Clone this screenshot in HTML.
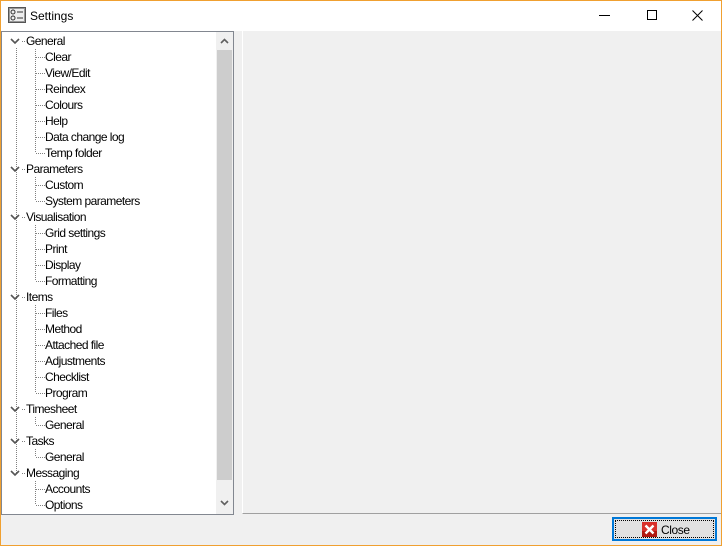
<!DOCTYPE html>
<html><head><style>
*{margin:0;padding:0;box-sizing:border-box}
body{width:722px;height:546px;background:#f0f0f0;position:relative;overflow:hidden;font-family:"Liberation Sans",Tahoma,sans-serif;font-size:12px;color:#000}
.frame{position:absolute;left:0;top:0;width:722px;height:546px;border:1px solid #f0a030;pointer-events:none;z-index:10}
.title{position:absolute;left:0;top:0;width:722px;height:31px;background:#fff}
.title .t{position:absolute;left:30px;top:9px;font-size:12px}
.tree{position:absolute;left:1px;top:31px;width:233px;height:484px;background:#fff;border:1px solid #828790}
.sb{position:absolute;left:214px;top:0;width:17px;height:482px;background:#f0f0f0}
.thumb{position:absolute;left:1px;top:18px;width:15px;height:430px;background:#cdcdcd}
.row{position:absolute;height:16px;line-height:16px;white-space:nowrap;letter-spacing:-0.55px}
.panel{position:absolute;left:242px;top:31px;width:479px;height:483px;background:#f0f0f0;border-left:1px solid #fff;border-bottom:1px solid #a0a0a0}
.btn{position:absolute;left:612px;top:517px;width:105px;height:24px;border:2px solid #0078d7;background:#e1e1e1}
.btn .in{position:absolute;left:1px;top:1px;right:1px;bottom:1px;border:1px dotted #000}
</style></head><body>
<div class="title">
<svg style="position:absolute;left:8px;top:7px" width="18" height="16"><rect x="0.5" y="0.5" width="17" height="15" fill="#ddd" stroke="#555"/><rect x="1.5" y="1.5" width="15" height="13" fill="#eee" stroke="#999"/><circle cx="5" cy="5" r="2" fill="none" stroke="#333"/><circle cx="5" cy="11" r="2" fill="none" stroke="#333"/><line x1="9" y1="5" x2="15" y2="5" stroke="#333"/><line x1="9" y1="11" x2="15" y2="11" stroke="#333"/></svg>
<div class="t">Settings</div>
<div style="position:absolute;left:599px;top:15px;width:11px;height:1px;background:#000"></div>
<div style="position:absolute;left:647px;top:10px;width:10px;height:10px;border:1px solid #000"></div>
<svg style="position:absolute;left:692px;top:10px" width="11" height="11"><path d="M0.5 0.5L10.5 10.5M10.5 0.5L0.5 10.5" stroke="#000"/></svg>
</div>
<div class="tree">
<svg style="position:absolute;left:0;top:0" width="214" height="482">
<g stroke="#808080" stroke-dasharray="1 1" fill="none">
<line x1="14.5" y1="16" x2="14.5" y2="441"/>
<line x1="20" y1="9.5" x2="23" y2="9.5"/><line x1="20" y1="137.5" x2="23" y2="137.5"/><line x1="20" y1="185.5" x2="23" y2="185.5"/><line x1="20" y1="265.5" x2="23" y2="265.5"/><line x1="20" y1="377.5" x2="23" y2="377.5"/><line x1="20" y1="409.5" x2="23" y2="409.5"/><line x1="20" y1="441.5" x2="23" y2="441.5"/>
<line x1="33.5" y1="17" x2="33.5" y2="121"/><line x1="33.5" y1="145" x2="33.5" y2="169"/><line x1="33.5" y1="193" x2="33.5" y2="249"/><line x1="33.5" y1="273" x2="33.5" y2="361"/><line x1="33.5" y1="385" x2="33.5" y2="393"/><line x1="33.5" y1="417" x2="33.5" y2="425"/><line x1="33.5" y1="449" x2="33.5" y2="473"/>
<path d="M34 25.5h9M34 41.5h9M34 57.5h9M34 73.5h9M34 89.5h9M34 105.5h9M34 121.5h9M34 153.5h9M34 169.5h9M34 201.5h9M34 217.5h9M34 233.5h9M34 249.5h9M34 281.5h9M34 297.5h9M34 313.5h9M34 329.5h9M34 345.5h9M34 361.5h9M34 393.5h9M34 425.5h9M34 457.5h9M34 473.5h9"/>
</g>
<g stroke="#555" stroke-width="1.6" fill="none">
<path d="M9 7l4 4 4-4"/><path d="M9 135l4 4 4-4"/><path d="M9 183l4 4 4-4"/><path d="M9 263l4 4 4-4"/><path d="M9 375l4 4 4-4"/><path d="M9 407l4 4 4-4"/><path d="M9 439l4 4 4-4"/>
</g>
</svg>
<div class="row" style="left:24px;top:1px">General</div>
<div class="row" style="left:43px;top:17px">Clear</div>
<div class="row" style="left:43px;top:33px">View/Edit</div>
<div class="row" style="left:43px;top:49px">Reindex</div>
<div class="row" style="left:43px;top:65px">Colours</div>
<div class="row" style="left:43px;top:81px">Help</div>
<div class="row" style="left:43px;top:97px">Data change log</div>
<div class="row" style="left:43px;top:113px">Temp folder</div>
<div class="row" style="left:24px;top:129px">Parameters</div>
<div class="row" style="left:43px;top:145px">Custom</div>
<div class="row" style="left:43px;top:161px">System parameters</div>
<div class="row" style="left:24px;top:177px">Visualisation</div>
<div class="row" style="left:43px;top:193px">Grid settings</div>
<div class="row" style="left:43px;top:209px">Print</div>
<div class="row" style="left:43px;top:225px">Display</div>
<div class="row" style="left:43px;top:241px">Formatting</div>
<div class="row" style="left:24px;top:257px">Items</div>
<div class="row" style="left:43px;top:273px">Files</div>
<div class="row" style="left:43px;top:289px">Method</div>
<div class="row" style="left:43px;top:305px">Attached file</div>
<div class="row" style="left:43px;top:321px">Adjustments</div>
<div class="row" style="left:43px;top:337px">Checklist</div>
<div class="row" style="left:43px;top:353px">Program</div>
<div class="row" style="left:24px;top:369px">Timesheet</div>
<div class="row" style="left:43px;top:385px">General</div>
<div class="row" style="left:24px;top:401px">Tasks</div>
<div class="row" style="left:43px;top:417px">General</div>
<div class="row" style="left:24px;top:433px">Messaging</div>
<div class="row" style="left:43px;top:449px">Accounts</div>
<div class="row" style="left:43px;top:465px">Options</div>
<div class="sb"><div class="thumb"></div>
<svg style="position:absolute;left:4px;top:6px" width="9" height="6"><path d="M1 5l3.5-3.5L8 5" stroke="#606060" stroke-width="1.6" fill="none"/></svg>
<svg style="position:absolute;left:4px;top:468px" width="9" height="6"><path d="M1 1l3.5 3.5L8 1" stroke="#606060" stroke-width="1.6" fill="none"/></svg>
</div>
</div>
<div class="panel"></div>
<div class="btn"><div class="in"></div>
<svg style="position:absolute;left:28px;top:3px" width="15" height="15"><rect width="15" height="15" fill="#d8302a"/><rect y="9" width="15" height="6" fill="#b01810"/><path d="M3.5 3.5l8 8M11.5 3.5l-8 8" stroke="#fff" stroke-width="2.4"/></svg>
<div style="position:absolute;left:47px;top:4px;font-size:12px;letter-spacing:-0.4px">Close</div>
</div>
<div class="frame"></div>
</body></html>
